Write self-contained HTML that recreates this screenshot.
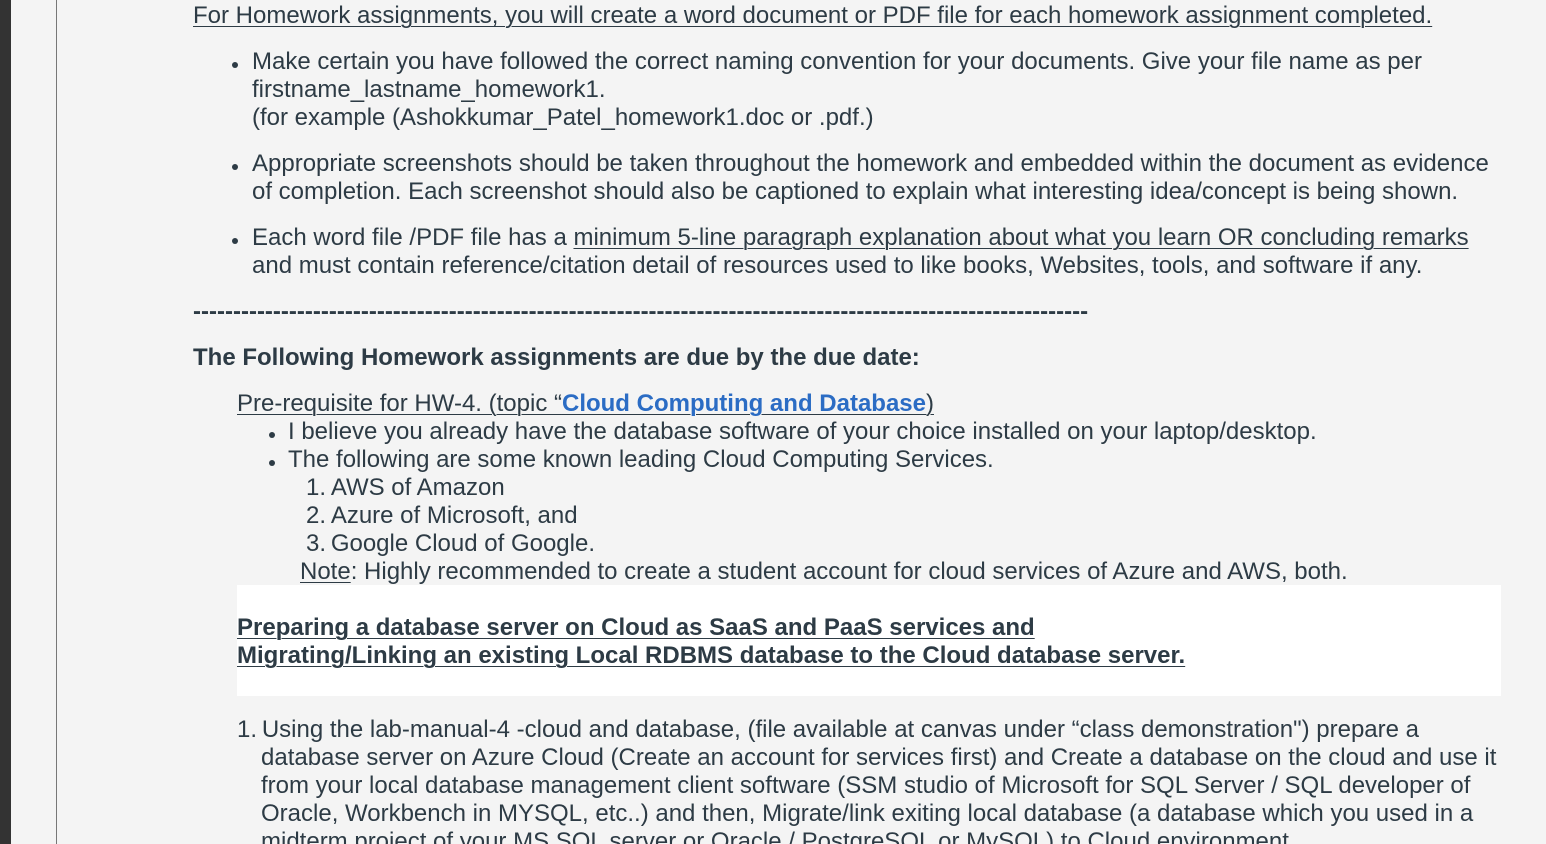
<!DOCTYPE html>
<html style="height:844px;overflow:hidden"><head><meta charset="utf-8"><style>
body{margin:0;width:1546px;height:844px;overflow:hidden;background:#f4f4f4;font-family:"Liberation Sans",Arial,sans-serif;color:#2d3b45;position:relative}
.bar{position:absolute;left:0;top:0;width:11px;height:844px;background:#333}
.vl{position:absolute;left:56px;top:0;width:1px;height:844px;background:#777}
.w{position:absolute;left:0;top:1px;width:1546px;height:844px}
.l{position:absolute;white-space:nowrap;font-size:24px;line-height:28px}
u{text-decoration-thickness:1px;text-underline-offset:3px}
.b{font-weight:bold}
.blue{color:#2b6cc4;font-weight:bold}
.box{position:absolute;left:237px;top:585px;width:1264px;height:111px;background:#fff}
.dot{position:absolute;width:6px;height:6px;border-radius:50%;background:#2d3b45}
</style></head><body>
<div class="bar"></div><div class="vl"></div>
<div class="box"></div>
<div class="w">
<div class="l" style="left:193px;top:1px"><u>For Homework assignments, you will create a word document or PDF file for each homework assignment completed.</u></div>
<div class="dot" style="left:232px;top:61px"></div>
<div class="l" style="left:252px;top:47px">Make certain you have followed the correct naming convention for your documents. Give your file name as per</div>
<div class="l" style="left:252px;top:75px">firstname_lastname_homework1.</div>
<div class="l" style="left:252px;top:103px">(for example (Ashokkumar_Patel_homework1.doc or .pdf.)</div>
<div class="dot" style="left:232px;top:163px"></div>
<div class="l" style="left:252px;top:149px">Appropriate screenshots should be taken throughout the homework and embedded within the document as evidence</div>
<div class="l" style="left:252px;top:177px">of completion. Each screenshot should also be captioned to explain what interesting idea/concept is being shown.</div>
<div class="dot" style="left:232px;top:237px"></div>
<div class="l" style="left:252px;top:223px">Each word file /PDF file has a <u>minimum 5-line paragraph explanation about what you learn OR concluding remarks</u></div>
<div class="l" style="left:252px;top:251px">and must contain reference/citation detail of resources used to like books, Websites, tools, and software if any.</div>
<div class="l b" style="left:193px;top:297px">----------------------------------------------------------------------------------------------------------------</div>
<div class="l b" style="left:193px;top:343px">The Following Homework assignments are due by the due date:</div>
<div class="l" style="left:237px;top:389px"><u>Pre-requisite for HW-4. (topic “<span class="blue">Cloud Computing and Database</span>)</u></div>
<div class="dot" style="left:269px;top:431px"></div>
<div class="l" style="left:288px;top:417px">I believe you already have the database software of your choice installed on your laptop/desktop.</div>
<div class="dot" style="left:269px;top:459px"></div>
<div class="l" style="left:288px;top:445px">The following are some known leading Cloud Computing Services.</div>
<div class="l" style="left:306px;top:473px">1.&#8201;AWS of Amazon</div>
<div class="l" style="left:306px;top:501px">2.&#8201;Azure of Microsoft, and</div>
<div class="l" style="left:306px;top:529px">3.&#8201;Google Cloud of Google.</div>
<div class="l" style="left:300px;top:557px"><u>Note</u>: Highly recommended to create a student account for cloud services of Azure and AWS, both.</div>
<div class="l b" style="left:237px;top:613px"><u>Preparing a database server on Cloud as SaaS and PaaS services and</u></div>
<div class="l b" style="left:237px;top:641px"><u>Migrating/Linking an existing Local RDBMS database to the Cloud database server.</u></div>
<div class="l" style="left:237px;top:715px">1.&#8201;Using the lab-manual-4 -cloud and database, (file available at canvas under “class demonstration") prepare a</div>
<div class="l" style="left:261px;top:743px">database server on Azure Cloud (Create an account for services first) and Create a database on the cloud and use it</div>
<div class="l" style="left:261px;top:771px">from your local database management client software (SSM studio of Microsoft for SQL Server / SQL developer of</div>
<div class="l" style="left:261px;top:799px">Oracle, Workbench in MYSQL, etc..) and then, Migrate/link exiting local database (a database which you used in a</div>
<div class="l" style="left:261px;top:827px">midterm project of your MS SQL server or Oracle / PostgreSQL or MySQL) to Cloud environment.</div>
</div>
</body></html>
